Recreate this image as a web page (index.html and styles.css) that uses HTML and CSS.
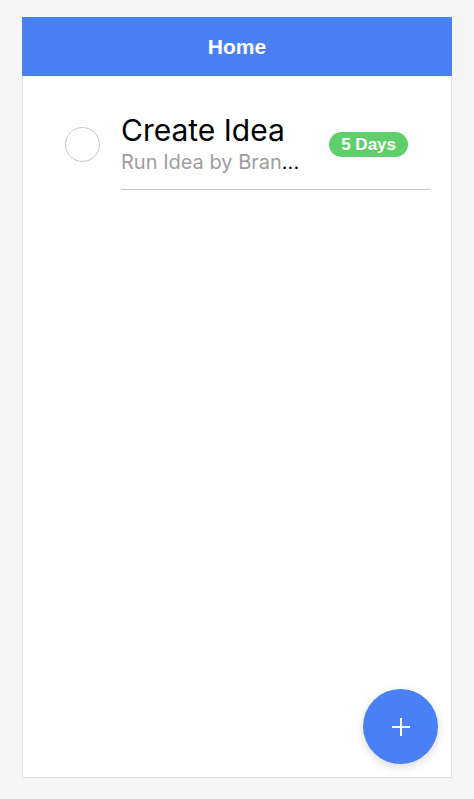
FILE: index.html
```html
<!DOCTYPE html>
<html lang="en">
<head>
    <meta charset="UTF-8" />
    <title>Home</title>
    <link rel="stylesheet" href="styles.css">
</head>
<body>

<div class="phone">
    <div class="header">Home</div>

    <div class="item">
        <div class="check"></div>
        <div class="texts">
            <div class="title">Create Idea</div>
            <div class="subtitle">Run Idea by Bran<span class="dots">...</span></div>
        </div>
        <div class="badge">5 Days</div>
        <div class="divider"></div>
    </div>

    <button class="fab" type="button">
        <svg width="20" height="20" viewBox="0 0 20 20">
            <path d="M10 1 V19 M1 10 H19" stroke="#fff" stroke-width="2" fill="none" />
        </svg>
    </button>
</div>

</body>
</html>
```

FILE: styles.css
```css
body {
    margin: 0;
    background-color: #f5f5f5;
    font-family: Inter, "Liberation Sans", Arial, sans-serif;
}
.phone {
    position: relative;
    box-sizing: border-box;
    width: 430px;
    height: 761px;
    margin: 17px 0 0 22px;
    background-color: #fff;
    border: 1px solid #e2e2e2;
    border-top: none;
}
.header {
    height: 59px;
    margin: 0 -1px;
    background-color: #4a80f5;
    color: #fff;
    font-family: "Liberation Sans", Arial, sans-serif;
    font-size: 21px;
    font-weight: bold;
    line-height: 60px;
    text-align: center;
}
.item {
    display: grid;
    grid-template-columns: 35px 1fr auto;
    column-gap: 21px;
    align-items: center;
    margin: 36px 21px 0 42px;
}
.check {
    width: 35px;
    height: 35px;
    box-sizing: border-box;
    border: 1px solid #c8c8c8;
    border-radius: 50%;
}
.title {
    font-size: 30px;
    line-height: 36px;
    color: #000;
}
.subtitle {
    font-size: 20px;
    line-height: 28px;
    color: #9e9e9e;
}
.dots {
    color: #000;
}
.badge {
    margin-right: 22px;
    padding: 0 12px;
    height: 25px;
    line-height: 25px;
    border-radius: 13px;
    background-color: #5fcf6b;
    color: #fff;
    font-family: "Liberation Sans", Arial, sans-serif;
    font-size: 17px;
    font-weight: bold;
}
.divider {
    grid-column: 2 / 4;
    height: 1px;
    margin-top: 13px;
    background-color: #c8c8c8;
}
.fab {
    position: absolute;
    right: 13px;
    bottom: 13px;
    width: 75px;
    height: 75px;
    border: none;
    border-radius: 50%;
    background-color: #4a80f5;
    box-shadow: 0 3px 10px rgba(0, 0, 0, 0.15);
    display: flex;
    align-items: center;
    justify-content: center;
    cursor: pointer;
}
```
